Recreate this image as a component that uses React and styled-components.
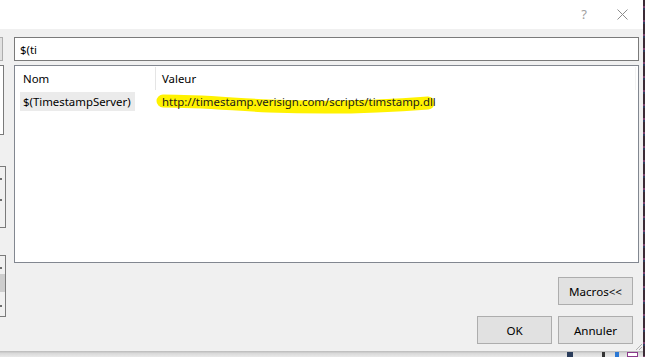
import styled, { createGlobalStyle } from "styled-components";

const Global = createGlobalStyle`
  html, body { margin: 0; padding: 0; }
  body {
    width: 645px;
    height: 357px;
    overflow: hidden;
    background: #e6e6e6;
    font-family: "Segoe UI", "Noto Sans", sans-serif;
    font-size: 11.4px;
    color: #000;
  }
`;

const Screen = styled.div`
  display: flex;
  width: 645px;
  height: 357px;
`;

const Window = styled.div`
  display: flex;
  flex-direction: column;
  width: 643px;
  height: 357px;
`;

const Dialog = styled.div`
  position: relative;
  display: flex;
  flex-direction: column;
  height: 351px;
  background: #f0f0f0;
`;

const BackWindow = styled.div`
  width: 2px;
  height: 357px;
  background: repeating-linear-gradient(180deg, #3b2b36 0 6px, #7b3f6b 6px 8px, #2f3f5f 8px 10px, #3b2b36 10px 14px);
`;

const TitleBar = styled.div`
  display: flex;
  justify-content: flex-end;
  align-items: center;
  gap: 30px;
  height: 29px;
  padding-right: 15px;
  background: #fff;
  color: #9a9a9a;
`;

const HelpMark = styled.span`
  font-size: 13px;
  font-family: "Noto Sans", sans-serif;
  color: #a0a0a0;
  margin-top: -2px;
`;

const Body = styled.div`
  flex: 1;
  display: flex;
  gap: 7px;
  padding-top: 8px;
`;

const Stubs = styled.div`
  position: relative;
  width: 7px;
`;

const Stub = styled.div`
  position: absolute;
  left: -4px;
  top: ${(p) => p.$top}px;
  width: ${(p) => p.$w + 3}px;
  height: ${(p) => p.$h}px;
  box-sizing: border-box;
  border: 1px solid ${(p) => (p.$button ? "#adadad" : "#7a7a7a")};
  background: ${(p) => p.$bg || "#f0f0f0"};
`;

const Tick = styled.div`
  position: absolute;
  left: 3px;
  top: ${(p) => p.$top}px;
  width: 2px;
  height: 2px;
  background: #6d6d6d;
`;

const Shade = styled.div`
  position: absolute;
  left: 3px;
  right: 0;
  top: ${(p) => p.$top}px;
  height: ${(p) => p.$h}px;
  background: #cdcdcd;
`;

const Main = styled.div`
  width: 625px;
  display: flex;
  flex-direction: column;
`;

const Search = styled.div`
  height: 24px;
  box-sizing: border-box;
  border: 1px solid #7a7a7a;
  background: #fff;
  display: flex;
  align-items: center;
  padding-left: 5px;
`;

const List = styled.div`
  position: relative;
  margin-top: 4px;
  height: 198px;
  box-sizing: border-box;
  border: 1px solid #828790;
  background: #fff;
  padding: 1px 2px 0 0;
`;

const Row = styled.div`
  display: grid;
  grid-template-columns: 141px 1fr;
  height: ${(p) => p.$h}px;
  align-items: center;
`;

const HeadCell = styled.div`
  height: 100%;
  display: flex;
  align-items: center;
  padding-left: ${(p) => p.$pad}px;
  border-right: 1px solid ${(p) => (p.$last ? "#f3f3f3" : "#e5e5e5")};
  color: #000;
`;

const Cell = styled.div`
  position: relative;
  display: flex;
  align-items: center;
  padding-left: ${(p) => p.$pad}px;
`;

const Selected = styled.span`
  display: inline-flex;
  align-items: center;
  height: 19px;
  padding: 0 4px 0 3px;
  background: #ebebeb;
`;

const Marker = styled.svg`
  position: absolute;
  left: 3px;
  top: -5px;
  width: 280px;
  height: 30px;
  overflow: visible;
`;

const ValueText = styled.span`
  position: relative;
  color: #1a1a1a;
`;

const ButtonRow = styled.div`
  display: flex;
  justify-content: flex-end;
  gap: 6px;
  padding-right: 6px;
  margin-top: ${(p) => p.$mt}px;
`;

const Button = styled.button`
  width: 75px;
  height: 28px;
  box-sizing: border-box;
  border: 1px solid #adadad;
  background: #e1e1e1;
  font-family: inherit;
  font-size: 11.6px;
  color: #000;
  padding: 0;
`;

const Shadow = styled.div`
  position: relative;
  height: 6px;
  background: linear-gradient(180deg, #b9b9b9 0%, #d9d9d9 40%, #e9e9e9 100%);
`;

const TrayIcon = styled.div`
  position: absolute;
  top: 1px;
  left: ${(p) => p.$left}px;
  width: ${(p) => p.$w}px;
  height: 5px;
  background: ${(p) => p.$bg};
  border: ${(p) => p.$border || "none"};
  box-sizing: border-box;
`;

const Grip = styled.svg`
  position: absolute;
  right: 0;
  bottom: 0;
`;

export default function App() {
  return (
    <Screen>
      <Global />
      <Window>
        <Dialog>
          <TitleBar>
            <HelpMark>?</HelpMark>
            <svg width="11" height="11" viewBox="0 0 11 11">
              <path d="M0.5 0.5 L10.5 10.5 M10.5 0.5 L0.5 10.5" stroke="#8c8c8c" strokeWidth="1" fill="none" />
            </svg>
          </TitleBar>
          <Body>
            <Stubs>
              <Stub $top={0} $h={24} $w={4} $button $bg="#e1e1e1" />
              <Stub $top={28} $h={70} $w={5} $bg="#fff" />
              <Stub $top={129} $h={62} $w={7}>
                <Tick $top={11} />
                <Tick $top={32} />
              </Stub>
              <Stub $top={218} $h={62} $w={7}>
                <Tick $top={11} />
                <Shade $top={18} $h={18} />
                <Tick $top={49} />
              </Stub>
            </Stubs>
            <Main>
              <Search>$(ti</Search>
              <List>
                <Row $h={23}>
                  <HeadCell $pad={8}>Nom</HeadCell>
                  <HeadCell $pad={6} $last>Valeur</HeadCell>
                </Row>
                <Row $h={22}>
                  <Cell $pad={5}>
                    <Selected>$(TimestampServer)</Selected>
                  </Cell>
                  <Cell $pad={6}>
                    <Marker viewBox="0 0 280 30">
                      <path
                        d="M4 12 C 40 12, 70 15, 110 17 C 160 19, 220 18, 269 14"
                        stroke="#fff200"
                        strokeWidth="13"
                        strokeLinecap="round"
                        fill="none"
                      />
                    </Marker>
                    <ValueText>http://timestamp.verisign.com/scripts/timstamp.dll</ValueText>
                  </Cell>
                </Row>
              </List>
              <ButtonRow $mt={14}>
                <Button>Macros&lt;&lt;</Button>
              </ButtonRow>
              <ButtonRow $mt={11}>
                <Button>OK</Button>
                <Button>Annuler</Button>
              </ButtonRow>
            </Main>
          </Body>
          <Grip width="8" height="8" viewBox="0 0 8 8">
            <path d="M7 1 L1 7 M7 4 L4 7" stroke="#b0b0b0" strokeWidth="1" />
          </Grip>
        </Dialog>
        <Shadow>
          <TrayIcon $left={567} $w={6} $bg="#2c3e5c" />
          <TrayIcon $left={602} $w={3} $bg="#333" />
          <TrayIcon $left={615} $w={4} $bg="#2b78d4" />
          <TrayIcon $left={627} $w={11} $bg="#fff" $border="1px solid #8b3a8b" />
        </Shadow>
      </Window>
      <BackWindow />
    </Screen>
  );
}
